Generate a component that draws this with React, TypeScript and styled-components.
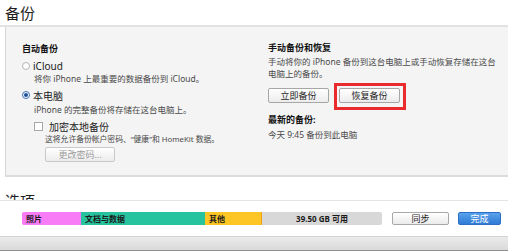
import React from 'react';
import styled, { createGlobalStyle } from 'styled-components';

const GlobalStyle = createGlobalStyle`
	html, body {
		margin: 0;
		padding: 0;
		background: #ffffff;
	}
	body {
		font-family: 'Noto Sans', 'Noto Sans CJK SC', sans-serif;
		color: #2b2b2b;
	}
`;

const Page = styled.div`
	position: relative;
	width: 508px;
	height: 251px;
	overflow: hidden;
	background: #ffffff;
`;

const Title = styled.h1`
	margin: 0;
	padding: 2px 0 0 5px;
	height: 23px;
	font-size: 15px;
	line-height: 22px;
	font-weight: 400;
	color: #1e1e1e;
	border-bottom: 2px solid #e2e2e2;
`;

const Panel = styled.div`
	display: grid;
	grid-template-columns: 246px 1fr;
	margin-left: 5px;
	height: 150px;
	box-sizing: border-box;
	padding: 16px 0 0 16px;
	background: #f4f4f4;
	border-left: 1px solid #d6d6d6;
	border-bottom: 2px solid #dcdcdc;
`;

const Column = styled.div`
	display: flex;
	flex-direction: column;
	align-items: flex-start;
	min-width: 0;
`;

const Heading = styled.div<{ $top?: number }>`
	font-size: 9px;
	line-height: 12px;
	font-weight: 700;
	color: #111;
	margin-top: ${(p) => p.$top ?? 0}px;
`;

const OptionRow = styled.label<{ $top: number; $indent?: number }>`
	display: flex;
	align-items: center;
	gap: 3px;
	height: 14px;
	margin-top: ${(p) => p.$top}px;
	margin-left: ${(p) => p.$indent ?? 0}px;
	font-size: 10px;
	color: #222;
`;

const Radio = styled.span<{ $on?: boolean }>`
	position: relative;
	width: 8px;
	height: 8px;
	border-radius: 50%;
	box-sizing: border-box;
	border: 1px solid ${(p) => (p.$on ? '#3c6fb5' : '#b4b4b4')};
	background: #fff;
	&::after {
		content: '';
		display: ${(p) => (p.$on ? 'block' : 'none')};
		position: absolute;
		left: 1px;
		top: 1px;
		width: 4px;
		height: 4px;
		border-radius: 50%;
		background: #1f4f9a;
	}
`;

const Check = styled.span`
	width: 7px;
	height: 7px;
	margin-right: 3px;
	border: 1px solid #a8a8a8;
	background: #fff;
`;

const Desc = styled.div<{ $top?: number; $indent?: number; $small?: boolean }>`
	margin-top: ${(p) => p.$top ?? 0}px;
	margin-left: ${(p) => p.$indent ?? 0}px;
	font-size: ${(p) => (p.$small ? 7.8 : 8.5)}px;
	line-height: ${(p) => (p.$small ? 11 : 12)}px;
	color: #4a4a4a;
	white-space: nowrap;
`;

const Button = styled.button<{ $w: number; $disabled?: boolean }>`
	display: block;
	width: ${(p) => p.$w}px;
	height: 15px;
	padding: 0;
	font-family: inherit;
	font-size: 9px;
	line-height: 13px;
	color: ${(p) => (p.$disabled ? '#9a9a9a' : '#1f1f1f')};
	border: 1px solid ${(p) => (p.$disabled ? '#c9c9c9' : '#a6a6a6')};
	border-radius: 2px;
	background: linear-gradient(#ffffff, #ececec);
`;

const ButtonWrap = styled.div`
	display: flex;
	margin: 2px 0 0 23px;
`;

const ButtonRow = styled.div`
	display: flex;
	gap: 10px;
	margin-top: 8px;
`;

const Marked = styled.div`
	position: relative;
	display: flex;
	&::after {
		content: '';
		position: absolute;
		left: -5px;
		right: -6px;
		top: -5px;
		bottom: -7px;
		border: 3px solid #ea2b2e;
	}
`;

const SubTitle = styled.div`
	margin: 13px 0 0 5px;
	font-size: 15px;
	line-height: 22px;
	color: #1e1e1e;
`;

const Footer = styled.div`
	position: absolute;
	left: 0;
	right: 0;
	bottom: 0;
	height: 51px;
	display: flex;
	flex-direction: column;
	background: #ffffff;
	border-top: 1px solid #e4e4e4;
	box-sizing: border-box;
`;

const StorageRow = styled.div`
	display: flex;
	align-items: center;
	padding: 10px 0 0 22px;
	height: 14px;
`;

const Bar = styled.div`
	display: flex;
	height: 13px;
	border-radius: 2px;
	overflow: hidden;
`;

const Segment = styled.div<{ $color: string; $w: number; $center?: boolean; $edge?: string }>`
	width: ${(p) => p.$w}px;
	box-sizing: border-box;
	padding-left: ${(p) => (p.$center ? 0 : 4)}px;
	text-align: ${(p) => (p.$center ? 'center' : 'left')};
	background: ${(p) => p.$color};
	border-right: ${(p) => (p.$edge ? `1px solid ${p.$edge}` : 'none')};
	font-size: 8px;
	line-height: 13px;
	font-weight: 700;
	color: #1a1a1a;
	white-space: nowrap;
`;

const FooterButton = styled.button<{ $w: number; $gap: number; $primary?: boolean }>`
	width: ${(p) => p.$w}px;
	height: 13px;
	margin-left: ${(p) => p.$gap}px;
	padding: 0;
	font-family: inherit;
	font-size: 9px;
	line-height: 11px;
	border-radius: 2px;
	color: ${(p) => (p.$primary ? '#ffffff' : '#1f1f1f')};
	border: 1px solid ${(p) => (p.$primary ? '#2c6ec4' : '#a8a8a8')};
	background: ${(p) =>
		p.$primary ? 'linear-gradient(#5aa2ec, #2f7ad6)' : 'linear-gradient(#ffffff, #ebebeb)'};
`;

const BottomStrip = styled.div`
	margin-top: auto;
	height: 15px;
	box-sizing: border-box;
	border-top: 1px solid #d3d3d3;
	border-bottom: 1px solid #8e8e8e;
	background: linear-gradient(#ebebeb, #dadada);
`;

const segments = [
	{ label: '照片', color: '#f87cf6', w: 59 },
	{ label: '文档与数据', color: '#27c39e', w: 124 },
	{ label: '其他', color: '#fec624', w: 57, edge: '#f0a010' },
	{ label: '39.50 GB 可用', color: '#d8d8d8', w: 120, center: true },
];

export default function App() {
	return (
		<Page>
			<GlobalStyle />
			<Title>备份</Title>
			<Panel>
				<Column>
					<Heading>自动备份</Heading>
					<OptionRow $top={4}>
						<Radio />
						iCloud
					</OptionRow>
					<Desc $indent={12}>将你 iPhone 上最重要的数据备份到 iCloud。</Desc>
					<OptionRow $top={3}>
						<Radio $on />
						本电脑
					</OptionRow>
					<Desc $indent={12} $top={2}>
						iPhone 的完整备份将存储在这台电脑上。
					</Desc>
					<OptionRow $top={3} $indent={12}>
						<Check />
						加密本地备份
					</OptionRow>
					<Desc $indent={23} $top={1} $small>
						这将允许备份帐户密码、“健康”和 HomeKit 数据。
					</Desc>
					<ButtonWrap>
						<Button $w={70} $disabled>
							更改密码...
						</Button>
					</ButtonWrap>
				</Column>
				<Column>
					<Heading $top={-1}>手动备份和恢复</Heading>
					<Desc $top={2}>
						手动将你的 iPhone 备份到这台电脑上或手动恢复存储在这台
						<br />
						电脑上的备份。
					</Desc>
					<ButtonRow>
						<Button $w={61}>立即备份</Button>
						<Marked>
							<Button $w={61}>恢复备份</Button>
						</Marked>
					</ButtonRow>
					<Heading $top={11}>最新的备份:</Heading>
					<Desc $top={3}>今天 9:45 备份到此电脑</Desc>
				</Column>
			</Panel>
			<SubTitle>选项</SubTitle>
			<Footer>
				<StorageRow>
					<Bar>
						{segments.map((s) => (
							<Segment key={s.label} $color={s.color} $w={s.w} $center={s.center} $edge={s.edge}>
								{s.label}
							</Segment>
						))}
					</Bar>
					<FooterButton $w={57} $gap={10}>
						同步
					</FooterButton>
					<FooterButton $w={43} $gap={9} $primary>
						完成
					</FooterButton>
				</StorageRow>
				<BottomStrip />
			</Footer>
		</Page>
	);
}
